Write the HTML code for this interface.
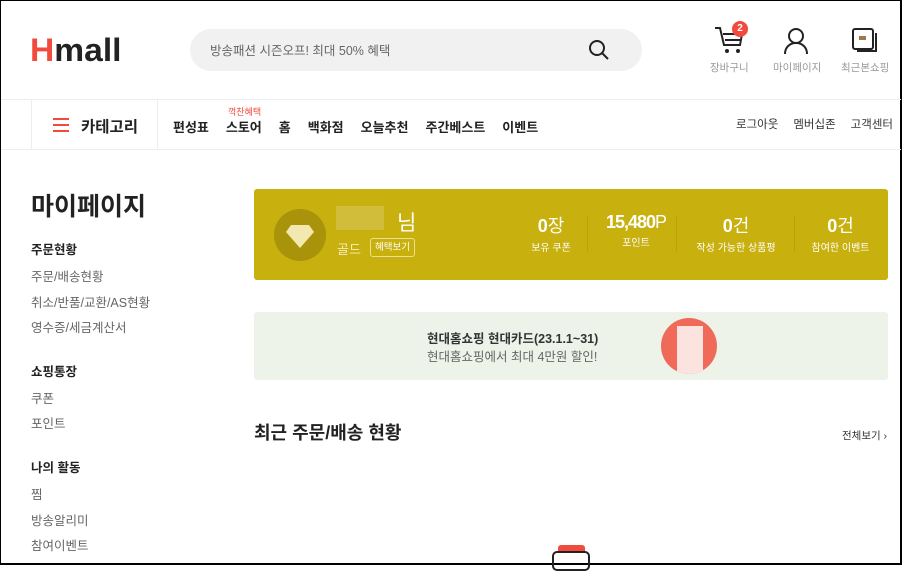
<!DOCTYPE html>
<html><head><meta charset="utf-8"><style>
*{margin:0;padding:0;box-sizing:border-box}
body{width:902px;height:565px;overflow:hidden;background:#fff;font-family:"Liberation Sans","Noto Sans CJK KR",sans-serif;color:#222;position:relative;border:1px solid #000;border-right:2px solid #000;border-bottom:2px solid #000}
.a{position:absolute;white-space:nowrap}
</style></head><body>
<div class="a" style="left:29px;top:29px;font-size:32px;font-weight:bold;letter-spacing:0px;line-height:40px;transform:scaleX(1.05);transform-origin:left"><span style="color:#f04b3c">H</span><span style="color:#222">mall</span></div>
<div class="a" style="left:189px;top:28px;width:452px;height:42px;border-radius:21px;background:#f1f1f1"></div>
<div class="a" style="left:209px;top:39px;font-size:12.5px;color:#666">방송패션 시즌오프! 최대 50% 혜택</div>
<svg class="a" style="left:586px;top:37px" width="24" height="24" viewBox="0 0 24 24"><circle cx="10" cy="10" r="7" fill="none" stroke="#222" stroke-width="2"/><path d="M15 15l6 6" stroke="#222" stroke-width="2"/></svg>
<svg class="a" style="left:712px;top:24px" width="32" height="30" viewBox="0 0 32 30"><path d="M2 3h5l4 17h16l2-11H10" fill="none" stroke="#222" stroke-width="2"/><path d="M12 15h15" stroke="#222" stroke-width="2"/><circle cx="14" cy="26" r="2" fill="#222"/><circle cx="25" cy="26" r="2" fill="#222"/></svg>
<div class="a" style="left:731px;top:20px;width:16px;height:16px;border-radius:50%;background:#f04b3c;color:#fff;font-size:10px;font-weight:bold;text-align:center;line-height:16px">2</div>
<div class="a" style="left:709px;top:59px;font-size:10.5px;color:#999">장바구니</div>
<svg class="a" style="left:781px;top:26px" width="28" height="28" viewBox="0 0 28 28"><circle cx="14" cy="9" r="7" fill="none" stroke="#222" stroke-width="2"/><path d="M3 27c0-7 5-11 11-11s11 4 11 11" fill="none" stroke="#222" stroke-width="2"/></svg>
<div class="a" style="left:772px;top:59px;font-size:10.5px;color:#999">마이페이지</div>
<svg class="a" style="left:850px;top:26px" width="28" height="28" viewBox="0 0 28 28"><rect x="2" y="2" width="20" height="20" rx="2" fill="none" stroke="#222" stroke-width="2"/><path d="M25 6v18H6" fill="none" stroke="#222" stroke-width="2"/><rect x="8" y="9" width="7" height="4" fill="#9a7a4a"/></svg>
<div class="a" style="left:840px;top:59px;font-size:10.5px;color:#999">최근본쇼핑</div>
<div class="a" style="left:0;top:98px;width:900px;height:1px;background:#eee"></div>
<div class="a" style="left:0;top:148px;width:900px;height:1px;background:#eee"></div>
<div class="a" style="left:30px;top:99px;width:1px;height:49px;background:#eee"></div>
<div class="a" style="left:156px;top:99px;width:1px;height:49px;background:#eee"></div>
<div class="a" style="left:52px;top:117px;width:16px;height:2px;background:#f04b3c;box-shadow:0 6px 0 #f04b3c,0 12px 0 #f04b3c"></div>
<div class="a" style="left:80px;top:114px;font-size:15.5px;font-weight:bold">카테고리</div>
<div class="a" style="left:227px;top:104px;font-size:9px;color:#f04b3c">꺽찬혜택</div>
<div class="a" style="left:172px;top:116px;font-size:13px;font-weight:bold">편성표<span style="margin-left:17px">스토어</span><span style="margin-left:17px">홈</span><span style="margin-left:17px">백화점</span><span style="margin-left:17px">오늘추천</span><span style="margin-left:17px">주간베스트</span><span style="margin-left:17px">이벤트</span></div>
<div class="a" style="left:735px;top:115px;font-size:11.5px;color:#333">로그아웃<span style="margin-left:15px">멤버십존</span><span style="margin-left:15px">고객센터</span></div>
<div class="a" style="left:30px;top:186px;font-size:25px;font-weight:bold">마이페이지</div>
<div class="a" style="left:30px;top:238px;font-size:12.5px;font-weight:bold">주문현황</div>
<div class="a" style="left:30px;top:264px;font-size:12.5px;color:#666;line-height:25.5px">주문/배송현황<br>취소/반품/교환/AS현황<br>영수증/세금계산서</div>
<div class="a" style="left:30px;top:360px;font-size:12.5px;font-weight:bold">쇼핑통장</div>
<div class="a" style="left:30px;top:386px;font-size:12.5px;color:#666;line-height:25px">쿠폰<br>포인트</div>
<div class="a" style="left:30px;top:456px;font-size:12.5px;font-weight:bold">나의 활동</div>
<div class="a" style="left:30px;top:482px;font-size:12.5px;color:#666;line-height:25.5px">찜<br>방송알리미<br>참여이벤트</div>
<div class="a" style="left:253px;top:188px;width:634px;height:91px;border-radius:3px;background:#c8b00f"></div>
<div class="a" style="left:273px;top:208px;width:52px;height:52px;border-radius:50%;background:#a8930a"></div>
<svg class="a" style="left:284px;top:222px" width="30" height="26" viewBox="0 0 30 26"><path d="M6 2h18l5 7-14 16L1 9z" fill="#f3e8b0"/></svg>
<div class="a" style="left:335px;top:205px;width:48px;height:24px;background:#d2bd3a"></div>
<div class="a" style="left:396px;top:206px;font-size:21px;color:#fff">님</div>
<div class="a" style="left:336px;top:238px;font-size:13px;color:#f6eeb8">골드</div>
<div class="a" style="left:369px;top:237px;width:45px;height:19px;border:1px solid #ecdf90;border-radius:3px;font-size:9.5px;color:#fff;text-align:center;line-height:17px">혜택보기</div>
<div class="a" style="left:520px;top:211px;width:60px;text-align:center;color:#fff"><div style="font-size:18px;font-weight:bold">0<span style="font-weight:normal">장</span></div><div style="font-size:10px;margin-top:1px">보유 쿠폰</div></div>
<div class="a" style="left:586px;top:215px;width:1px;height:36px;background:#b9a20d"></div>
<div class="a" style="left:595px;top:211px;width:80px;text-align:center;color:#fff"><div style="font-size:18px;font-weight:bold;letter-spacing:-1px">15,480<span style="font-weight:normal">P</span></div><div style="font-size:10px;margin-top:1px">포인트</div></div>
<div class="a" style="left:675px;top:215px;width:1px;height:36px;background:#b9a20d"></div>
<div class="a" style="left:680px;top:211px;width:110px;text-align:center;color:#fff"><div style="font-size:18px;font-weight:bold">0<span style="font-weight:normal">건</span></div><div style="font-size:10px;margin-top:1px">작성 가능한 상품평</div></div>
<div class="a" style="left:793px;top:215px;width:1px;height:36px;background:#b9a20d"></div>
<div class="a" style="left:797px;top:211px;width:85px;text-align:center;color:#fff"><div style="font-size:18px;font-weight:bold">0<span style="font-weight:normal">건</span></div><div style="font-size:10px;margin-top:1px">참여한 이벤트</div></div>
<div class="a" style="left:253px;top:311px;width:634px;height:68px;border-radius:3px;background:#eef3ea"></div>
<div class="a" style="left:426px;top:327px;font-size:12.5px;font-weight:bold;color:#333">현대홈쇼핑 현대카드(23.1.1~31)</div>
<div class="a" style="left:426px;top:345px;font-size:12.5px;color:#666">현대홈쇼핑에서 최대 4만원 할인!</div>
<div class="a" style="left:660px;top:317px;width:56px;height:56px;border-radius:50%;background:#f06a5a;overflow:hidden"><div style="position:absolute;left:16px;top:8px;width:26px;height:48px;background:#fbe3e0"></div></div>
<div class="a" style="left:253px;top:418px;font-size:18px;font-weight:bold;color:#222">최근 주문/배송 현황</div>
<div class="a" style="left:841px;top:427px;font-size:10.5px;color:#333">전체보기 ›</div>
<div class="a" style="left:557px;top:544px;width:27px;height:6px;border-radius:3px 3px 0 0;background:#f04b3c"></div>
<div class="a" style="left:551px;top:550px;width:38px;height:20px;border:2px solid #222;border-radius:5px"></div>
</body></html>
